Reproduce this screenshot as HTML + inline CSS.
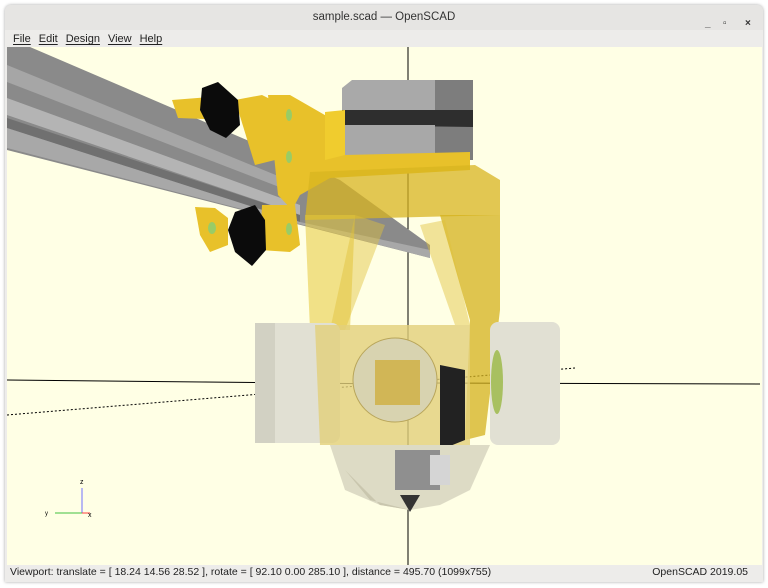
<!DOCTYPE html><html><head><style>
body{margin:0;width:768px;height:588px;background:#fff;font-family:"Liberation Sans",sans-serif;overflow:hidden}
.win{position:absolute;left:5px;top:5px;width:758px;height:577px;background:#edecea;border-radius:6px 6px 0 0;box-shadow:0 0 3px rgba(0,0,0,.35)}
.title{position:absolute;left:0;top:0;width:758px;height:25px;text-align:center;font-size:11.5px;line-height:25px;color:#333;background:#e6e5e3;border-radius:6px 6px 0 0}
.btn{position:absolute;top:6px;font-size:10px;color:#333;font-weight:bold}
.menu{position:absolute;left:8px;top:28px;font-size:11px;color:#222}
.menu span{margin-right:8px;text-decoration:underline;text-decoration-thickness:1px;text-underline-offset:2px}
.vp{position:absolute;left:2px;top:42px;width:755px;height:518px;background:#ffffe5;overflow:hidden}
.status{position:absolute;left:2px;top:561px;width:755px;font-size:10.5px;color:#222}
</style></head><body>
<div class="win">
<div class="title">sample.scad — OpenSCAD
<span class="btn" style="left:700px">_</span><span class="btn" style="left:718px">▫</span><span class="btn" style="left:740px">×</span></div>
<div class="menu"><span>File</span><span>Edit</span><span>Design</span><span>View</span><span>Help</span></div>
<div class="vp">
<svg width="755" height="518" viewBox="7 47 755 518">
<line x1="408" y1="47" x2="408" y2="565" stroke="#000" stroke-width="1"/>
<line x1="7" y1="380" x2="400" y2="384" stroke="#000"/>
<line x1="420" y1="383" x2="760" y2="384" stroke="#000"/>
<line x1="7" y1="415" x2="575" y2="368" stroke="#000" stroke-dasharray="2,2"/>
<!-- rail -->
<polygon points="7,47 30,47 340,180 430,245 430,258 7,150" fill="#8a8a8a"/>
<polygon points="7,65 300,185 300,195 7,82" fill="#a6a6a6"/>
<polygon points="7,98 300,205 300,215 7,115" fill="#b4b4b4"/>
<polygon points="7,118 300,215 300,222 7,128" fill="#707070"/>
<polygon points="7,128 300,222 430,250 430,258 7,148" fill="#a8a8a8"/>
<!-- motor -->
<polygon points="342,88 352,80 462,80 473,92 473,160 342,160" fill="#a9a9a9"/>
<rect x="435" y="80" width="38" height="80" fill="#7d7d7d"/>
<polygon points="342,110 473,110 473,127 342,125" fill="#2e2e2e"/>
<rect x="342" y="125" width="93" height="35" fill="#a8a8a8"/>
<!-- yellow bracket -->
<polygon points="172,100 210,97 230,100 230,120 178,118" fill="#e8c12a"/>
<polygon points="235,100 262,95 272,100 275,160 255,165" fill="#e8c12a"/>
<polygon points="268,95 290,95 330,118 345,120 345,155 470,152 470,170 330,178 300,195 292,210 278,195" fill="#e8c12a"/>
<polygon points="325,112 345,110 345,155 325,160" fill="#f0cc2e"/>
<polygon points="202,88 218,82 238,100 240,125 226,138 210,130 200,110" fill="#0b0b0b"/>
<polygon points="195,207 215,208 228,218 228,245 210,252 200,235" fill="#e8c12a"/>
<polygon points="262,205 295,205 300,245 290,252 260,250" fill="#e8c12a"/>
<polygon points="235,212 255,205 265,220 266,250 252,266 235,252 228,230" fill="#0b0b0b"/>
<ellipse cx="289" cy="115" rx="3" ry="6" fill="#9c6"/>
<ellipse cx="289" cy="157" rx="3" ry="6" fill="#9c6"/>
<ellipse cx="289" cy="229" rx="3" ry="6" fill="#9c6"/>
<ellipse cx="212" cy="228" rx="4" ry="6" fill="#9c6"/>
<!-- translucent arms -->
<polygon points="310,172 475,165 500,180 500,215 305,220" fill="#d8b420" opacity=".75"/>
<polygon points="305,215 355,215 350,330 310,330" fill="#e6c93a" opacity=".55"/>
<polygon points="355,215 385,225 345,330 330,330" fill="#e0c23a" opacity=".45"/>
<polygon points="440,215 500,215 500,310 485,435 465,440 470,320" fill="#d4b21c" opacity=".75"/>
<polygon points="420,225 445,220 470,325 455,325" fill="#e0c23a" opacity=".45"/>
<!-- white blocks -->
<rect x="255" y="323" width="85" height="120" rx="8" fill="#e1e0d3"/>
<rect x="490" y="322" width="70" height="123" rx="8" fill="#e1e0d3"/>
<rect x="255" y="323" width="20" height="120" fill="#d2d1c3"/>
<polygon points="315,325 470,325 470,445 320,445" fill="#e2d07a" opacity=".8"/>
<circle cx="395" cy="380" r="42" fill="#d8d3b0" stroke="#b8a55a"/>
<rect x="375" y="360" width="45" height="45" fill="#cfaa30" opacity=".7"/>
<polygon points="440,365 465,370 465,440 440,450" fill="#222"/>
<ellipse cx="497" cy="382" rx="6" ry="32" fill="#a8c060"/>
<!-- bottom -->
<polygon points="330,445 490,445 470,490 440,505 410,510 380,505 345,490" fill="#dddbc5"/>
<polygon points="345,470 380,505 410,510 370,500" fill="#c9c6ae"/>
<rect x="395" y="450" width="45" height="40" fill="#8f8f8f"/>
<rect x="430" y="455" width="20" height="30" fill="#d5d5d5"/>
<polygon points="400,495 420,495 410,512" fill="#333"/>
<line x1="408" y1="510" x2="408" y2="565" stroke="#000" stroke-dasharray="2,2"/>
<!-- axes -->
<line x1="82" y1="488" x2="82" y2="513" stroke="#7070ff"/>
<line x1="55" y1="513" x2="82" y2="513" stroke="#40c040"/>
<line x1="82" y1="513" x2="90" y2="513" stroke="#ff4040"/>
<text x="80" y="484" font-size="7" font-family="Liberation Sans">z</text>
<text x="45" y="515" font-size="6" font-family="Liberation Sans">y</text>
<text x="88" y="517" font-size="7" font-family="Liberation Sans">x</text>
</svg>
</div>
<div class="status"><span style="position:absolute;left:3px">Viewport: translate = [ 18.24 14.56 28.52 ], rotate = [ 92.10 0.00 285.10 ], distance = 495.70 (1099x755)</span><span style="position:absolute;right:14px">OpenSCAD 2019.05</span></div>
</div>
</body></html>
